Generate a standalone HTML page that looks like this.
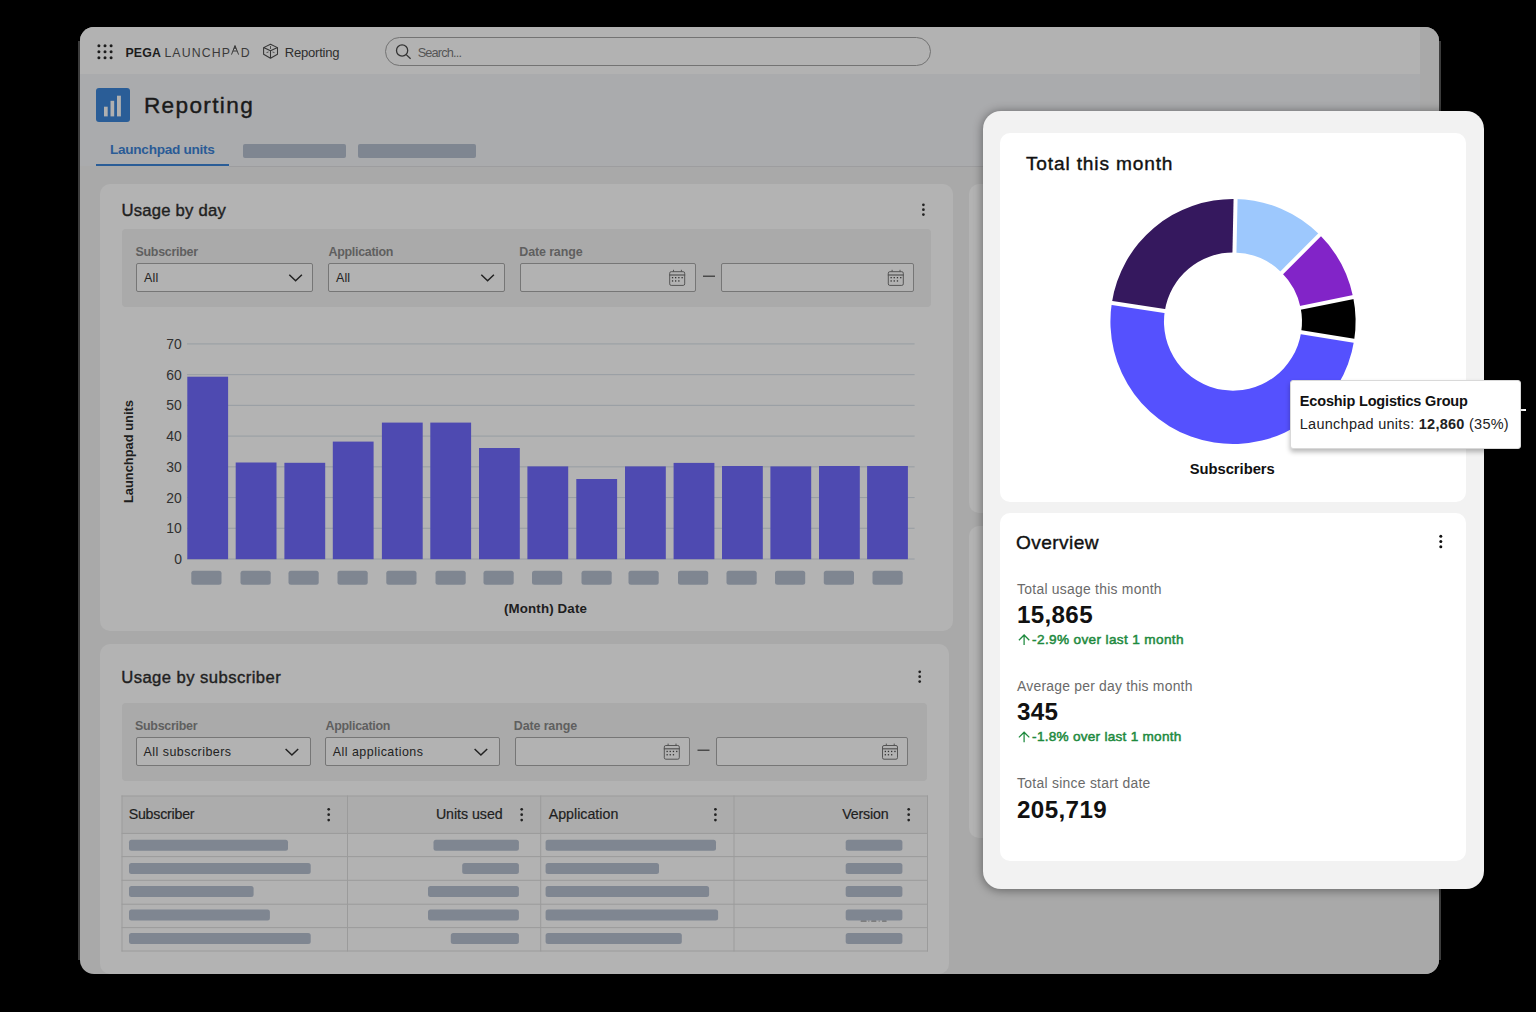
<!DOCTYPE html>
<html><head><meta charset="utf-8">
<style>
*{box-sizing:border-box;margin:0;padding:0}
html,body{width:1536px;height:1012px;overflow:hidden;background:#000;font-family:"Liberation Sans",sans-serif;color:#222}
.a{position:absolute}
.t{white-space:nowrap;line-height:1}
</style></head>
<body>

<!-- window -->
<div class="a" style="left:78px;top:41px;width:4px;height:919px;background:#3c3c3c"></div>
<div class="a" style="left:1436px;top:41px;width:5px;height:919px;background:#3c3c3c"></div>
<div class="a" style="left:80px;top:27px;width:1359px;height:947px;border-radius:14px;background:#a9a9a9;overflow:hidden">
  <div class="a" style="left:0;top:46px;width:1340px;height:93px;background:#aaabad"></div>
  <div class="a" style="left:0;top:0;width:1340px;height:46.5px;background:#b2b2b2"></div>
  <div class="a" style="left:1340px;top:0;width:19px;height:947px;background:#a9a9a9"></div>
  <div class="a" style="left:149px;top:138.5px;width:1191px;height:1px;background:#9d9d9f"></div>
</div>
<!-- header -->
<div class="a" style="left:385.2px;top:37.2px;width:546px;height:28.8px;border:1px solid #737373;border-radius:15px"></div>
<div class="a" style="left:96px;top:88px;width:34px;height:34px;background:#2a5d97;border-radius:3px"></div>
<div class="a" style="left:96px;top:164px;width:133px;height:2px;background:#2a5d97"></div>
<div class="a" style="left:243px;top:144px;width:103px;height:14px;background:#7f8691;border-radius:2px"></div>
<div class="a" style="left:358px;top:144px;width:118px;height:14px;background:#7f8691;border-radius:2px"></div>
<!-- card 1 -->
<div class="a" style="left:100px;top:184px;width:852.5px;height:447px;background:#b3b3b3;border-radius:10px"></div>
<div class="a" style="left:122px;top:229px;width:809px;height:77.5px;background:#aaaaaa;border-radius:4px"></div>
<div class="a" style="left:136px;top:263px;width:177.0px;height:29.0px;background:#b2b2b2;border:1px solid #767676;border-radius:2px"></div>
<div class="a" style="left:328px;top:263px;width:177.0px;height:29.0px;background:#b2b2b2;border:1px solid #767676;border-radius:2px"></div>
<div class="a" style="left:520px;top:263px;width:176.0px;height:29.0px;background:#b2b2b2;border:1px solid #767676;border-radius:2px"></div>
<div class="a" style="left:721px;top:263px;width:193.0px;height:29.0px;background:#b2b2b2;border:1px solid #767676;border-radius:2px"></div>
<!-- card 2 -->
<div class="a" style="left:100px;top:644px;width:849px;height:329.6px;background:#b3b3b3;border-radius:10px"></div>
<div class="a" style="left:122px;top:702.6px;width:805px;height:78px;background:#aaaaaa;border-radius:4px"></div>
<div class="a" style="left:136px;top:737px;width:175.0px;height:29.0px;background:#b2b2b2;border:1px solid #767676;border-radius:2px"></div>
<div class="a" style="left:325px;top:737px;width:175.0px;height:29.0px;background:#b2b2b2;border:1px solid #767676;border-radius:2px"></div>
<div class="a" style="left:515px;top:737px;width:175.0px;height:29.0px;background:#b2b2b2;border:1px solid #767676;border-radius:2px"></div>
<div class="a" style="left:716px;top:737px;width:192.0px;height:29.0px;background:#b2b2b2;border:1px solid #767676;border-radius:2px"></div>
<!-- right partial cards -->
<div class="a" style="left:969px;top:184px;width:60px;height:329px;background:#b3b3b3;border-radius:10px"></div>
<div class="a" style="left:969px;top:526px;width:60px;height:312px;background:#b3b3b3;border-radius:10px"></div>
<svg class="a" style="left:0;top:0" width="1536" height="1012" viewBox="0 0 1536 1012">
<rect x="187" y="343.40" width="727.6" height="1" fill="#979da3"/>
<rect x="187" y="374.13" width="727.6" height="1" fill="#979da3"/>
<rect x="187" y="404.86" width="727.6" height="1" fill="#979da3"/>
<rect x="187" y="435.59" width="727.6" height="1" fill="#979da3"/>
<rect x="187" y="466.32" width="727.6" height="1" fill="#979da3"/>
<rect x="187" y="497.05" width="727.6" height="1" fill="#979da3"/>
<rect x="187" y="527.78" width="727.6" height="1" fill="#979da3"/>
<rect x="187" y="558.51" width="727.6" height="1" fill="#979da3"/>
<rect x="187.3" y="376.7" width="40.8" height="182.5" fill="#4e4ab1"/>
<rect x="235.7" y="462.5" width="40.8" height="96.7" fill="#4e4ab1"/>
<rect x="284.4" y="462.8" width="40.8" height="96.4" fill="#4e4ab1"/>
<rect x="332.8" y="441.6" width="40.8" height="117.6" fill="#4e4ab1"/>
<rect x="381.9" y="422.6" width="40.8" height="136.6" fill="#4e4ab1"/>
<rect x="430.3" y="422.6" width="40.8" height="136.6" fill="#4e4ab1"/>
<rect x="479.0" y="448.0" width="40.8" height="111.2" fill="#4e4ab1"/>
<rect x="527.4" y="466.4" width="40.8" height="92.8" fill="#4e4ab1"/>
<rect x="576.3" y="479.0" width="40.8" height="80.2" fill="#4e4ab1"/>
<rect x="625.0" y="466.4" width="40.8" height="92.8" fill="#4e4ab1"/>
<rect x="673.6" y="462.9" width="40.8" height="96.3" fill="#4e4ab1"/>
<rect x="722.0" y="466.0" width="40.8" height="93.2" fill="#4e4ab1"/>
<rect x="770.4" y="466.4" width="40.8" height="92.8" fill="#4e4ab1"/>
<rect x="819.0" y="466.0" width="40.8" height="93.2" fill="#4e4ab1"/>
<rect x="867.1" y="466.0" width="40.8" height="93.2" fill="#4e4ab1"/>
<rect x="191.3" y="570.7" width="30.2" height="14" rx="2.5" fill="#7f8691"/>
<rect x="240.5" y="570.7" width="30.2" height="14" rx="2.5" fill="#7f8691"/>
<rect x="288.5" y="570.7" width="30.2" height="14" rx="2.5" fill="#7f8691"/>
<rect x="337.5" y="570.7" width="30.2" height="14" rx="2.5" fill="#7f8691"/>
<rect x="386.3" y="570.7" width="30.2" height="14" rx="2.5" fill="#7f8691"/>
<rect x="435.5" y="570.7" width="30.2" height="14" rx="2.5" fill="#7f8691"/>
<rect x="483.5" y="570.7" width="30.2" height="14" rx="2.5" fill="#7f8691"/>
<rect x="532.0" y="570.7" width="30.2" height="14" rx="2.5" fill="#7f8691"/>
<rect x="581.5" y="570.7" width="30.2" height="14" rx="2.5" fill="#7f8691"/>
<rect x="628.5" y="570.7" width="30.2" height="14" rx="2.5" fill="#7f8691"/>
<rect x="678.0" y="570.7" width="30.2" height="14" rx="2.5" fill="#7f8691"/>
<rect x="726.5" y="570.7" width="30.2" height="14" rx="2.5" fill="#7f8691"/>
<rect x="775.0" y="570.7" width="30.2" height="14" rx="2.5" fill="#7f8691"/>
<rect x="823.8" y="570.7" width="30.2" height="14" rx="2.5" fill="#7f8691"/>
<rect x="872.5" y="570.7" width="30.2" height="14" rx="2.5" fill="#7f8691"/>
<rect x="122" y="796" width="805.5" height="37.5" fill="#acacac"/><rect x="122" y="833.5" width="805.5" height="117.5" fill="#b2b2b2"/><rect x="121.5" y="795.5" width="806.5" height="1" fill="#9b9b9b"/><rect x="121.5" y="832.9" width="806.5" height="1" fill="#9b9b9b"/><rect x="121.5" y="856.1" width="806.5" height="1" fill="#9b9b9b"/><rect x="121.5" y="879.8" width="806.5" height="1" fill="#9b9b9b"/><rect x="121.5" y="903.7" width="806.5" height="1" fill="#9b9b9b"/><rect x="121.5" y="927.1" width="806.5" height="1" fill="#9b9b9b"/><rect x="121.5" y="950.5" width="806.5" height="1" fill="#9b9b9b"/><rect x="121.5" y="795.5" width="1" height="156" fill="#9b9b9b"/><rect x="347.0" y="795.5" width="1" height="156" fill="#9b9b9b"/><rect x="540.2" y="795.5" width="1" height="156" fill="#9b9b9b"/><rect x="733.5" y="795.5" width="1" height="156" fill="#9b9b9b"/><rect x="927.0" y="795.5" width="1" height="156" fill="#9b9b9b"/>
<rect x="860.6" y="920.4" width="6.0" height="1.1" rx="0.5" fill="#2a2a2a" opacity=".75"/><rect x="868.3" y="920.4" width="1.1000000000000227" height="1.1" rx="0.5" fill="#2a2a2a" opacity=".75"/><rect x="871.2" y="920.4" width="5.199999999999932" height="1.1" rx="0.5" fill="#2a2a2a" opacity=".75"/><rect x="878.6" y="920.4" width="1.1000000000000227" height="1.1" rx="0.5" fill="#2a2a2a" opacity=".75"/><rect x="882" y="920.4" width="4.600000000000023" height="1.1" rx="0.5" fill="#2a2a2a" opacity=".75"/>
<rect x="129" y="839.8" width="159.0" height="11" rx="2.5" fill="#7f8691"/><rect x="433.5" y="839.8" width="85.4" height="11" rx="2.5" fill="#7f8691"/><rect x="545.6" y="839.8" width="170.4" height="11" rx="2.5" fill="#7f8691"/><rect x="845.7" y="839.8" width="56.7" height="11" rx="2.5" fill="#7f8691"/><rect x="129" y="862.9" width="181.7" height="11" rx="2.5" fill="#7f8691"/><rect x="462.2" y="862.9" width="56.7" height="11" rx="2.5" fill="#7f8691"/><rect x="545.6" y="862.9" width="113.4" height="11" rx="2.5" fill="#7f8691"/><rect x="845.7" y="862.9" width="56.7" height="11" rx="2.5" fill="#7f8691"/><rect x="129" y="886.1" width="124.6" height="11" rx="2.5" fill="#7f8691"/><rect x="428" y="886.1" width="90.9" height="11" rx="2.5" fill="#7f8691"/><rect x="545.6" y="886.1" width="163.5" height="11" rx="2.5" fill="#7f8691"/><rect x="845.7" y="886.1" width="56.7" height="11" rx="2.5" fill="#7f8691"/><rect x="129" y="909.5" width="140.9" height="11" rx="2.5" fill="#7f8691"/><rect x="428" y="909.5" width="90.9" height="11" rx="2.5" fill="#7f8691"/><rect x="545.6" y="909.5" width="172.5" height="11" rx="2.5" fill="#7f8691"/><rect x="845.7" y="909.5" width="56.7" height="11" rx="2.5" fill="#7f8691"/><rect x="129" y="932.9" width="181.7" height="11" rx="2.5" fill="#7f8691"/><rect x="450.8" y="932.9" width="68.1" height="11" rx="2.5" fill="#7f8691"/><rect x="545.6" y="932.9" width="136.2" height="11" rx="2.5" fill="#7f8691"/><rect x="845.7" y="932.9" width="56.7" height="11" rx="2.5" fill="#7f8691"/>
<circle cx="98.9" cy="45.7" r="1.5" fill="#1c1c1c"/><circle cx="105" cy="45.7" r="1.5" fill="#1c1c1c"/><circle cx="111.1" cy="45.7" r="1.5" fill="#1c1c1c"/><circle cx="98.9" cy="51.7" r="1.5" fill="#1c1c1c"/><circle cx="105" cy="51.7" r="1.5" fill="#1c1c1c"/><circle cx="111.1" cy="51.7" r="1.5" fill="#1c1c1c"/><circle cx="98.9" cy="57.8" r="1.5" fill="#1c1c1c"/><circle cx="105" cy="57.8" r="1.5" fill="#1c1c1c"/><circle cx="111.1" cy="57.8" r="1.5" fill="#1c1c1c"/><path d="M270.5 44.3 L277.5 47.6 L277.5 54.2 L270.5 58.2 L263.6 54.2 L263.6 47.6 Z M263.6 47.6 L270.5 50.8 L277.5 47.6 M270.5 50.8 L270.5 58.2" fill="none" stroke="#353535" stroke-width="1.05" stroke-linejoin="round"/><path d="M270.5 46 L270.5 49 M266.5 52.6 L268.5 52 M272.5 52 L274.5 52.6" stroke="#444" stroke-width="0.9"/><path d="M231.5 54.6 L235 45.6 L238.6 54.6 M232.9 51 L237.1 51" fill="none" stroke="#3a3a3a" stroke-width="1"/><path d="M235 45.3 L236.4 48.8 L233.6 48.8 Z" fill="#3a3a3a"/><circle cx="402.1" cy="50.5" r="5.6" fill="none" stroke="#333" stroke-width="1.3"/><path d="M406.2 54.6 L410.6 58.8" stroke="#333" stroke-width="1.3"/><rect x="104" y="106.7" width="3.7" height="9.7" fill="#b0b0b0"/><rect x="110.5" y="100.8" width="3.7" height="15.6" fill="#b0b0b0"/><rect x="117" y="95.7" width="3.9" height="20.7" fill="#b0b0b0"/><circle cx="923.4" cy="204.79999999999998" r="1.35" fill="#222"/><circle cx="923.4" cy="209.7" r="1.35" fill="#222"/><circle cx="923.4" cy="214.6" r="1.35" fill="#222"/><path d="M289.3 274.8 L295.6 280.8 L301.90000000000003 274.8" fill="none" stroke="#222" stroke-width="1.5"/><path d="M481.3 274.8 L487.6 280.8 L493.90000000000003 274.8" fill="none" stroke="#222" stroke-width="1.5"/><rect x="669.7" y="271.7" width="15" height="13.7" rx="1.5" fill="none" stroke="#555" stroke-width="1"/><rect x="669.2" y="274.4" width="16" height="1.2" fill="#555"/><rect x="673.0" y="269.8" width="1" height="2" fill="#555"/><rect x="680.9000000000001" y="269.8" width="1" height="2" fill="#555"/><rect x="671.9" y="277.0" width="1.3" height="1.3" fill="#333"/><rect x="671.9" y="280.3" width="1.3" height="1.3" fill="#333"/><rect x="675.0" y="277.0" width="1.3" height="1.3" fill="#333"/><rect x="675.0" y="280.3" width="1.3" height="1.3" fill="#333"/><rect x="678.2" y="277.0" width="1.3" height="1.3" fill="#333"/><rect x="678.2" y="280.3" width="1.3" height="1.3" fill="#333"/><rect x="681.5" y="277.0" width="1.3" height="1.3" fill="#333"/><rect x="888.3" y="271.7" width="15" height="13.7" rx="1.5" fill="none" stroke="#555" stroke-width="1"/><rect x="887.8" y="274.4" width="16" height="1.2" fill="#555"/><rect x="891.5999999999999" y="269.8" width="1" height="2" fill="#555"/><rect x="899.5" y="269.8" width="1" height="2" fill="#555"/><rect x="890.5" y="277.0" width="1.3" height="1.3" fill="#333"/><rect x="890.5" y="280.3" width="1.3" height="1.3" fill="#333"/><rect x="893.6" y="277.0" width="1.3" height="1.3" fill="#333"/><rect x="893.6" y="280.3" width="1.3" height="1.3" fill="#333"/><rect x="896.8" y="277.0" width="1.3" height="1.3" fill="#333"/><rect x="896.8" y="280.3" width="1.3" height="1.3" fill="#333"/><rect x="900.1" y="277.0" width="1.3" height="1.3" fill="#333"/><rect x="703" y="275.6" width="12" height="1.2" fill="#333"/><circle cx="919.7" cy="671.8000000000001" r="1.35" fill="#222"/><circle cx="919.7" cy="676.7" r="1.35" fill="#222"/><circle cx="919.7" cy="681.6" r="1.35" fill="#222"/><path d="M285.6 749.0 L291.90000000000003 755.0 L298.20000000000005 749.0" fill="none" stroke="#222" stroke-width="1.5"/><path d="M474.6 749.0 L480.90000000000003 755.0 L487.20000000000005 749.0" fill="none" stroke="#222" stroke-width="1.5"/><rect x="664.3" y="745.5" width="15" height="13.7" rx="1.5" fill="none" stroke="#555" stroke-width="1"/><rect x="663.8" y="748.2" width="16" height="1.2" fill="#555"/><rect x="667.5999999999999" y="743.6" width="1" height="2" fill="#555"/><rect x="675.5" y="743.6" width="1" height="2" fill="#555"/><rect x="666.5" y="750.8" width="1.3" height="1.3" fill="#333"/><rect x="666.5" y="754.1" width="1.3" height="1.3" fill="#333"/><rect x="669.6" y="750.8" width="1.3" height="1.3" fill="#333"/><rect x="669.6" y="754.1" width="1.3" height="1.3" fill="#333"/><rect x="672.8" y="750.8" width="1.3" height="1.3" fill="#333"/><rect x="672.8" y="754.1" width="1.3" height="1.3" fill="#333"/><rect x="676.1" y="750.8" width="1.3" height="1.3" fill="#333"/><rect x="882.5" y="745.5" width="15" height="13.7" rx="1.5" fill="none" stroke="#555" stroke-width="1"/><rect x="882.0" y="748.2" width="16" height="1.2" fill="#555"/><rect x="885.8" y="743.6" width="1" height="2" fill="#555"/><rect x="893.7" y="743.6" width="1" height="2" fill="#555"/><rect x="884.7" y="750.8" width="1.3" height="1.3" fill="#333"/><rect x="884.7" y="754.1" width="1.3" height="1.3" fill="#333"/><rect x="887.8" y="750.8" width="1.3" height="1.3" fill="#333"/><rect x="887.8" y="754.1" width="1.3" height="1.3" fill="#333"/><rect x="891.0" y="750.8" width="1.3" height="1.3" fill="#333"/><rect x="891.0" y="754.1" width="1.3" height="1.3" fill="#333"/><rect x="894.3" y="750.8" width="1.3" height="1.3" fill="#333"/><rect x="697.5" y="749.6" width="12" height="1.2" fill="#333"/><circle cx="328.7" cy="809.3000000000001" r="1.35" fill="#222"/><circle cx="328.7" cy="814.7" r="1.35" fill="#222"/><circle cx="328.7" cy="820.1" r="1.35" fill="#222"/><circle cx="521.7" cy="809.3000000000001" r="1.35" fill="#222"/><circle cx="521.7" cy="814.7" r="1.35" fill="#222"/><circle cx="521.7" cy="820.1" r="1.35" fill="#222"/><circle cx="715.4" cy="809.3000000000001" r="1.35" fill="#222"/><circle cx="715.4" cy="814.7" r="1.35" fill="#222"/><circle cx="715.4" cy="820.1" r="1.35" fill="#222"/><circle cx="908.7" cy="809.3000000000001" r="1.35" fill="#222"/><circle cx="908.7" cy="814.7" r="1.35" fill="#222"/><circle cx="908.7" cy="820.1" r="1.35" fill="#222"/>
</svg>
<div class="a t" style="left:0;top:0;transform-origin:0 0;transform:translate(123px,503.1px) rotate(-90deg);font-size:12.9px;font-weight:bold;color:#1e1e1e;letter-spacing:0px">Launchpad units</div>

<div class="a t" style="left:125.4px;top:46.5px;font-size:12.32px;font-weight:bold;color:#1c1c1c;letter-spacing:0.20px;">PEGA</div>
<div class="a t" style="left:164.4px;top:46.5px;font-size:12.32px;font-weight:normal;color:#3a3a3a;letter-spacing:1.12px;">LAUNCHP</div>
<div class="a t" style="left:240.8px;top:46.5px;font-size:12.32px;font-weight:normal;color:#3a3a3a;letter-spacing:0.00px;">D</div>
<div class="a t" style="left:284.8px;top:45.9px;font-size:13.04px;font-weight:normal;color:#2e2e2e;letter-spacing:-0.23px;">Reporting</div>
<div class="a t" style="left:417.7px;top:46.5px;font-size:12.75px;font-weight:normal;color:#555;letter-spacing:-0.84px;">Search...</div>
<div class="a t" style="left:143.9px;top:95.4px;font-size:22.61px;font-weight:normal;color:#1a1a1a;letter-spacing:1.35px;-webkit-text-stroke:0.4px">Reporting</div>
<div class="a t" style="left:110.0px;top:143.0px;font-size:13.62px;font-weight:bold;color:#2a5b96;letter-spacing:-0.29px;">Launchpad units</div>
<div class="a t" style="left:121.4px;top:202.6px;font-size:16.67px;font-weight:normal;color:#1f1f1f;letter-spacing:0.24px;-webkit-text-stroke:0.4px">Usage by day</div>
<div class="a t" style="left:135.5px;top:246.0px;font-size:12.46px;font-weight:bold;color:#5f5f5f;letter-spacing:-0.28px;">Subscriber</div>
<div class="a t" style="left:328.5px;top:246.0px;font-size:12.46px;font-weight:bold;color:#5f5f5f;letter-spacing:-0.30px;">Application</div>
<div class="a t" style="left:519.3px;top:246.0px;font-size:12.46px;font-weight:bold;color:#5f5f5f;letter-spacing:-0.12px;">Date range</div>
<div class="a t" style="left:144.0px;top:271.6px;font-size:12.46px;font-weight:normal;color:#222;letter-spacing:0.25px;">All</div>
<div class="a t" style="left:335.9px;top:271.6px;font-size:12.46px;font-weight:normal;color:#222;letter-spacing:0.20px;">All</div>
<div class="a t" style="left:121.2px;top:670.1px;font-size:16.67px;font-weight:normal;color:#1f1f1f;letter-spacing:0.43px;-webkit-text-stroke:0.4px">Usage by subscriber</div>
<div class="a t" style="left:135.0px;top:720.4px;font-size:12.46px;font-weight:bold;color:#5f5f5f;letter-spacing:-0.28px;">Subscriber</div>
<div class="a t" style="left:325.5px;top:720.4px;font-size:12.46px;font-weight:bold;color:#5f5f5f;letter-spacing:-0.30px;">Application</div>
<div class="a t" style="left:513.8px;top:720.4px;font-size:12.46px;font-weight:bold;color:#5f5f5f;letter-spacing:-0.12px;">Date range</div>
<div class="a t" style="left:143.6px;top:745.6px;font-size:12.46px;font-weight:normal;color:#222;letter-spacing:0.46px;">All subscribers</div>
<div class="a t" style="left:332.8px;top:745.6px;font-size:12.46px;font-weight:normal;color:#222;letter-spacing:0.47px;">All applications</div>
<div class="a t" style="left:128.7px;top:807.1px;font-size:14.2px;font-weight:normal;color:#1e1e1e;letter-spacing:-0.22px;-webkit-text-stroke:0.2px">Subscriber</div>
<div class="a t" style="left:435.9px;top:807.1px;font-size:14.2px;font-weight:normal;color:#1e1e1e;letter-spacing:-0.03px;-webkit-text-stroke:0.2px">Units used</div>
<div class="a t" style="left:548.7px;top:807.1px;font-size:14.2px;font-weight:normal;color:#1e1e1e;letter-spacing:0.02px;-webkit-text-stroke:0.2px">Application</div>
<div class="a t" style="left:842.3px;top:807.1px;font-size:14.2px;font-weight:normal;color:#1e1e1e;letter-spacing:-0.17px;-webkit-text-stroke:0.2px">Version</div>
<div class="a t" style="left:166.2px;top:337.9px;font-size:13.91px;font-weight:normal;color:#303030;letter-spacing:0.00px;">70</div>
<div class="a t" style="left:166.2px;top:368.6px;font-size:13.91px;font-weight:normal;color:#303030;letter-spacing:0.00px;">60</div>
<div class="a t" style="left:166.2px;top:399.3px;font-size:13.91px;font-weight:normal;color:#303030;letter-spacing:0.00px;">50</div>
<div class="a t" style="left:166.2px;top:430.1px;font-size:13.91px;font-weight:normal;color:#303030;letter-spacing:0.00px;">40</div>
<div class="a t" style="left:166.2px;top:460.8px;font-size:13.91px;font-weight:normal;color:#303030;letter-spacing:0.00px;">30</div>
<div class="a t" style="left:166.2px;top:491.5px;font-size:13.91px;font-weight:normal;color:#303030;letter-spacing:0.00px;">20</div>
<div class="a t" style="left:166.2px;top:522.3px;font-size:13.91px;font-weight:normal;color:#303030;letter-spacing:0.00px;">10</div>
<div class="a t" style="left:174.2px;top:553.0px;font-size:13.91px;font-weight:normal;color:#303030;letter-spacing:0.00px;">0</div>
<div class="a t" style="left:504.0px;top:602.0px;font-size:13.33px;font-weight:bold;color:#1e1e1e;letter-spacing:0.13px;">(Month) Date</div>

<div class="a" style="left:983px;top:110.8px;width:500.7px;height:778.7px;background:#f2f2f2;border-radius:18px;box-shadow:0 1px 10px 1px rgba(0,0,0,.38)"></div>
<div class="a" style="left:1000.2px;top:133px;width:465.6px;height:368.8px;background:#fff;border-radius:10px"></div>
<div class="a" style="left:1000.3px;top:513px;width:465.7px;height:347.6px;background:#fff;border-radius:10px"></div>
<svg class="a" style="left:0;top:0" width="1536" height="1012" viewBox="0 0 1536 1012">
<path d="M1235.57 198.93 A122.6 122.6 0 0 1 1319.69 234.81 L1281.79 272.71 A69.0 69.0 0 0 0 1234.45 252.52 Z" fill="#9dc8fd"/>
<path d="M1319.69 234.81 A122.6 122.6 0 0 1 1353.14 297.06 L1300.61 307.74 A69.0 69.0 0 0 0 1281.79 272.71 Z" fill="#8224c8"/>
<path d="M1353.14 297.06 A122.6 122.6 0 0 1 1354.09 340.68 L1301.15 332.29 A69.0 69.0 0 0 0 1300.61 307.74 Z" fill="#000000"/>
<path d="M1354.09 340.68 A122.6 122.6 0 0 1 1111.81 302.96 L1164.79 311.06 A69.0 69.0 0 0 0 1301.15 332.29 Z" fill="#5551fe"/>
<path d="M1111.81 302.96 A122.6 122.6 0 0 1 1235.57 198.93 L1234.45 252.52 A69.0 69.0 0 0 0 1164.79 311.06 Z" fill="#35185e"/>
<path d="M1234.38 255.51 L1235.63 195.93" stroke="#fff" stroke-width="4"/>
<path d="M1279.67 274.83 L1321.81 232.69" stroke="#fff" stroke-width="4"/>
<path d="M1297.68 308.34 L1356.08 296.46" stroke="#fff" stroke-width="4"/>
<path d="M1298.19 331.82 L1357.05 341.15" stroke="#fff" stroke-width="4"/>
<path d="M1167.76 311.52 L1108.85 302.50" stroke="#fff" stroke-width="4"/>
<circle cx="1440.8" cy="536.3" r="1.5" fill="#111"/><circle cx="1440.8" cy="541.5" r="1.5" fill="#111"/><circle cx="1440.8" cy="546.7" r="1.5" fill="#111"/>
<path d="M1024.1 635.1999999999999 L1024.1 645.1 M1018.9 640.1999999999999 L1024.1 635.0 L1029.3 640.1999999999999" fill="none" stroke="#1e8a3e" stroke-width="1.25"/>
<path d="M1024.1 732.4 L1024.1 742.3000000000001 M1018.9 737.4 L1024.1 732.2 L1029.3 737.4" fill="none" stroke="#1e8a3e" stroke-width="1.25"/>
<rect x="1520.5" y="409" width="5.5" height="2" fill="#fff"/>
</svg>
<div class="a" style="left:1290px;top:380px;width:230.5px;height:68.5px;background:#fff;border:1px solid #d9d9d9;border-radius:3px;box-shadow:0 3px 5px rgba(0,0,0,.28)"></div>

<div class="a t" style="left:1025.9px;top:154.3px;font-size:19.13px;font-weight:normal;color:#111;letter-spacing:0.85px;-webkit-text-stroke:0.4px">Total this month</div>
<div class="a t" style="left:1299.8px;top:394.0px;font-size:14.49px;font-weight:bold;color:#111;letter-spacing:-0.15px;">Ecoship Logistics Group</div>
<div class="a t" style="left:1299.8px;top:417.2px;font-size:14.49px;font-weight:normal;color:#222;letter-spacing:0.27px;">Launchpad units: <b>12,860</b> (35%)</div>
<div class="a t" style="left:1189.7px;top:461.6px;font-size:14.78px;font-weight:bold;color:#111;letter-spacing:-0.03px;">Subscribers</div>
<div class="a t" style="left:1016.1px;top:533.0px;font-size:19.13px;font-weight:normal;color:#111;letter-spacing:0.40px;-webkit-text-stroke:0.4px">Overview</div>
<div class="a t" style="left:1017.1px;top:582.9px;font-size:13.91px;font-weight:normal;color:#6a6a6a;letter-spacing:0.25px;">Total usage this month</div>
<div class="a t" style="left:1017.0px;top:602.9px;font-size:24.2px;font-weight:bold;color:#111;letter-spacing:0.32px;">15,865</div>
<div class="a t" style="left:1032.1px;top:632.8px;font-size:13.62px;font-weight:normal;color:#1e8a3e;letter-spacing:0.35px;-webkit-text-stroke:0.5px">-2.9% over last 1 month</div>
<div class="a t" style="left:1017.1px;top:680.0px;font-size:13.91px;font-weight:normal;color:#6a6a6a;letter-spacing:0.22px;">Average per day this month</div>
<div class="a t" style="left:1017.0px;top:700.4px;font-size:24.2px;font-weight:bold;color:#111;letter-spacing:0.35px;">345</div>
<div class="a t" style="left:1032.1px;top:730.0px;font-size:13.62px;font-weight:normal;color:#1e8a3e;letter-spacing:0.25px;-webkit-text-stroke:0.5px">-1.8% over last 1 month</div>
<div class="a t" style="left:1017.1px;top:777.3px;font-size:13.91px;font-weight:normal;color:#6a6a6a;letter-spacing:0.27px;">Total since start date</div>
<div class="a t" style="left:1017.0px;top:798.1px;font-size:24.2px;font-weight:bold;color:#111;letter-spacing:0.38px;">205,719</div>
</body></html>
